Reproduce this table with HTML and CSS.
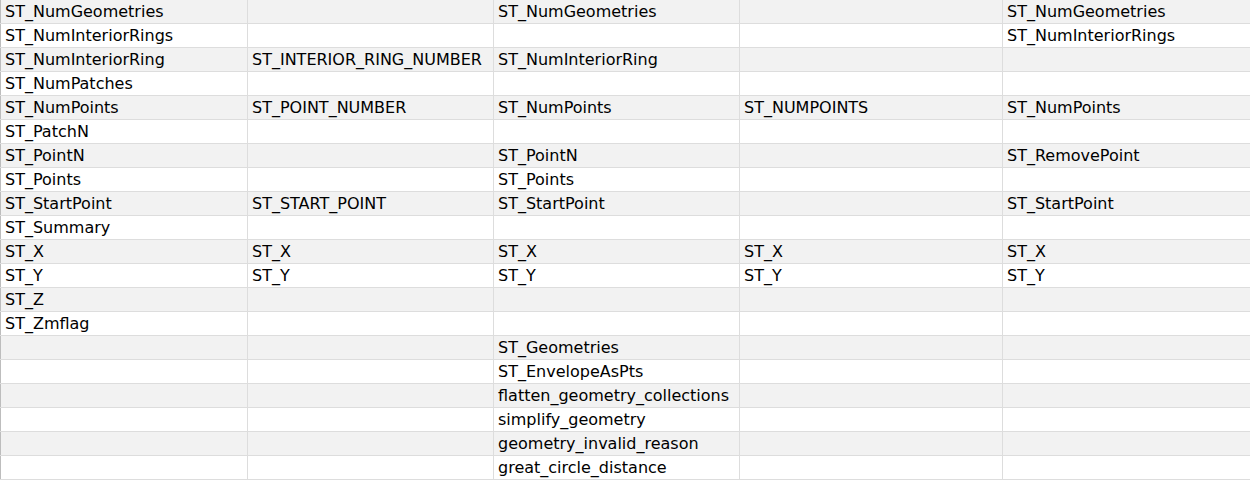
FILE: index.html
```html
<!DOCTYPE html>
<html>
<head>
<meta charset="utf-8">
<link rel="stylesheet" href="styles.css">
</head>
<body>
<table class="grid">
<colgroup>
<col class="c1"><col class="c2"><col class="c3"><col class="c4"><col class="c5">
</colgroup>
<tbody>
<tr><td>ST_NumGeometries</td><td></td><td>ST_NumGeometries</td><td></td><td>ST_NumGeometries</td></tr>
<tr><td>ST_NumInteriorRings</td><td></td><td></td><td></td><td>ST_NumInteriorRings</td></tr>
<tr><td>ST_NumInteriorRing</td><td>ST_INTERIOR_RING_NUMBER</td><td>ST_NumInteriorRing</td><td></td><td></td></tr>
<tr><td>ST_NumPatches</td><td></td><td></td><td></td><td></td></tr>
<tr><td>ST_NumPoints</td><td>ST_POINT_NUMBER</td><td>ST_NumPoints</td><td>ST_NUMPOINTS</td><td>ST_NumPoints</td></tr>
<tr><td>ST_PatchN</td><td></td><td></td><td></td><td></td></tr>
<tr><td>ST_PointN</td><td></td><td>ST_PointN</td><td></td><td>ST_RemovePoint</td></tr>
<tr><td>ST_Points</td><td></td><td>ST_Points</td><td></td><td></td></tr>
<tr><td>ST_StartPoint</td><td>ST_START_POINT</td><td>ST_StartPoint</td><td></td><td>ST_StartPoint</td></tr>
<tr><td>ST_Summary</td><td></td><td></td><td></td><td></td></tr>
<tr><td>ST_X</td><td>ST_X</td><td>ST_X</td><td>ST_X</td><td>ST_X</td></tr>
<tr><td>ST_Y</td><td>ST_Y</td><td>ST_Y</td><td>ST_Y</td><td>ST_Y</td></tr>
<tr><td>ST_Z</td><td></td><td></td><td></td><td></td></tr>
<tr><td>ST_Zmflag</td><td></td><td></td><td></td><td></td></tr>
<tr><td></td><td></td><td>ST_Geometries</td><td></td><td></td></tr>
<tr><td></td><td></td><td>ST_EnvelopeAsPts</td><td></td><td></td></tr>
<tr><td></td><td></td><td>flatten_geometry_collections</td><td></td><td></td></tr>
<tr><td></td><td></td><td>simplify_geometry</td><td></td><td></td></tr>
<tr><td></td><td></td><td>geometry_invalid_reason</td><td></td><td></td></tr>
<tr><td></td><td></td><td>great_circle_distance</td><td></td><td></td></tr>
</tbody>
</table>
</body>
</html>
```
FILE: styles.css
```css
html, body {
  margin: 0;
  padding: 0;
  background: #ffffff;
}
.grid {
  border-collapse: collapse;
  table-layout: fixed;
  width: 1250px;
  font-family: "DejaVu Sans", Verdana, sans-serif;
  font-size: 16px;
  color: #000;
  border-left: 1px solid #bdbdbd;
}
.c1 { width: 247px; }
.c2 { width: 246px; }
.c3 { width: 246px; }
.c4 { width: 263px; }
.c5 { width: 248px; }
.grid td {
  height: 23px;
  padding: 0 0 0 4px;
  border-right: 1px solid #dddddd;
  border-bottom: 1px solid #dddddd;
  white-space: nowrap;
  overflow: hidden;
  vertical-align: middle;
  line-height: 23px;
}
.grid tr:nth-child(odd) td {
  background: #f2f2f2;
}
```
